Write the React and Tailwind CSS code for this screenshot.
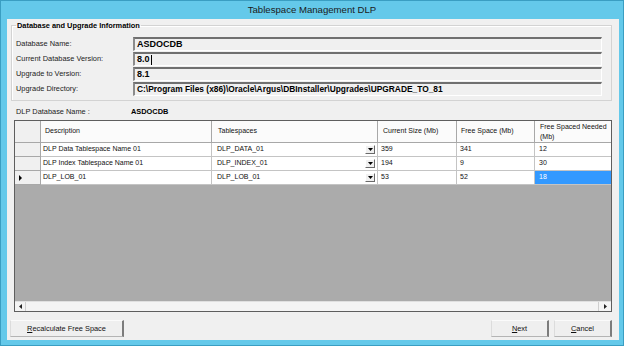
import React from "react";

const fields = [
  { label: "Database Name:", value: "ASDOCDB", size: "text-[9px]" },
  { label: "Current Database Version:", value: "8.0", size: "text-[9px]", caret: true },
  { label: "Upgrade to Version:", value: "8.1", size: "text-[9px]" },
  {
    label: "Upgrade Directory:",
    value: "C:\\Program Files (x86)\\Oracle\\Argus\\DBInstaller\\Upgrades\\UPGRADE_TO_81",
    size: "text-[8.4px]",
  },
];

const rows = [
  { desc: "DLP Data Tablespace Name 01", ts: "DLP_DATA_01", size: "359", free: "341", need: "12" },
  { desc: "DLP Index Tablespace Name 01", ts: "DLP_INDEX_01", size: "194", free: "9", need: "30" },
  { desc: "DLP_LOB_01", ts: "DLP_LOB_01", size: "53", free: "52", need: "18", current: true },
];

const DropButton = () => (
  <div className="w-[10px] h-[9px] mr-[2px] flex items-center justify-center bg-[#f0f0f0] border-t border-l border-t-white border-l-white border-r border-b border-r-[#6a6a6a] border-b-[#6a6a6a]">
    <svg width="5" height="3" viewBox="0 0 5 3">
      <polygon points="0,0 5,0 2.5,3" fill="#000" />
    </svg>
  </div>
);

const WinButton = ({ children, className }) => (
  <button
    className={`h-[17px] flex items-center justify-center bg-[#efefef] text-[7.4px] text-[#111] border-t border-l border-t-[#fbfbfb] border-l-[#dcdcdc] border-r-2 border-b border-r-[#7c7c7c] border-b-[#b4b4b4] ${className}`}
  >
    {children}
  </button>
);

export default function App() {
  return (
    <div className="w-[624px] h-[346px] bg-[#64c9ea] border border-[#3a9ec2] flex flex-col font-['Liberation_Sans',Arial,sans-serif] text-black">
      {/* Title bar */}
      <div className="h-[18px] flex items-center justify-center text-[9.6px] text-[#1b1b1b]">
        Tablespace Management DLP
      </div>

      {/* Client area */}
      <div className="ml-[6px] mr-[4px] mb-[5px] flex-1 bg-[#f0f0f0] flex flex-col">
        {/* Group box */}
        <fieldset className="mt-[2px] ml-[4px] w-[600px] border border-[#d3d3d3] shadow-[inset_1px_1px_0_#ffffff] pl-[4px] pr-[9px] pb-[4px]">
          <legend className="text-[7.4px] leading-[9px] font-bold px-[1px]">
            Database and Upgrade Information
          </legend>
          <div className="mt-[7px] grid grid-cols-[117px_469px] gap-y-[1px]">
            {fields.map((f) => (
              <React.Fragment key={f.label}>
                <div className="h-[14px] flex items-center text-[7.4px] text-[#222]">{f.label}</div>
                <div className="h-[14px] flex items-center pl-[2px] border-t-2 border-l-2 border-t-[#707070] border-l-[#8c8c8c] border-b border-r border-b-white border-r-white">
                  <span className={`${f.size} font-bold leading-none`}>{f.value}</span>
                  {f.caret && <span className="ml-[1px] w-px h-[10px] bg-black" />}
                </div>
              </React.Fragment>
            ))}
          </div>
        </fieldset>

        {/* DLP Database Name */}
        <div className="mt-[5px] h-[12px] flex items-center pl-[9px] text-[7.4px]">
          <span className="w-[115px] text-[#222]">DLP Database Name :</span>
          <span className="font-bold">ASDOCDB</span>
        </div>

        {/* Grid */}
        <div className="mt-[2px] ml-[7px] w-[598px] h-[192px] border border-[#5e5e5e] flex flex-col text-[7px] text-[#111]">
          <div className="grid grid-cols-[26px_171px_166px_79px_78px_76px]">
            {/* header */}
            <div className="h-[22px] bg-[#f0f0f0] border-r border-b border-[#a8a8a8]" />
            <div className="h-[22px] bg-[#fbfbfb] border-r border-b border-[#a8a8a8] flex items-center pl-[4px]">Description</div>
            <div className="h-[22px] bg-[#fbfbfb] border-r border-b border-[#a8a8a8] flex items-center pl-[6px]">Tablespaces</div>
            <div className="h-[22px] bg-[#fbfbfb] border-r border-b border-[#a8a8a8] flex items-center pl-[5px]">Current Size (Mb)</div>
            <div className="h-[22px] bg-[#fbfbfb] border-r border-b border-[#a8a8a8] flex items-center pl-[4px]">Free Space (Mb)</div>
            <div className="h-[22px] bg-[#fbfbfb] border-b border-[#a8a8a8] flex items-center pl-[5px] leading-[10px]">
              Free Spaced Needed
              <br />
              (Mb)
            </div>

            {rows.map((r) => (
              <React.Fragment key={r.desc}>
                <div className="h-[14px] bg-[#f0f0f0] border-r border-b border-[#a8a8a8] flex items-center pl-[4px]">
                  {r.current && (
                    <svg width="3" height="6" viewBox="0 0 3 6">
                      <polygon points="0,0 3,3 0,6" fill="#000" />
                    </svg>
                  )}
                </div>
                <div className="h-[14px] bg-white border-r border-b border-[#c4c4c4] flex items-center pl-[2px]">{r.desc}</div>
                <div className="h-[14px] bg-white border-r border-b border-[#c4c4c4] flex items-center justify-between pl-[5px]">
                  <span>{r.ts}</span>
                  <DropButton />
                </div>
                <div className="h-[14px] bg-white border-r border-b border-[#c4c4c4] flex items-center pl-[3px]">{r.size}</div>
                <div className="h-[14px] bg-white border-r border-b border-[#c4c4c4] flex items-center pl-[3px]">{r.free}</div>
                <div
                  className={`h-[14px] border-b border-[#c4c4c4] flex items-center pl-[4px] ${
                    r.current ? "bg-[#3399ff] text-white" : "bg-white"
                  }`}
                >
                  {r.need}
                </div>
              </React.Fragment>
            ))}
          </div>

          <div className="flex-1 bg-[#ababab]" />

          {/* horizontal scrollbar */}
          <div className="h-[10px] bg-[#f4f4f4] flex justify-between border-t border-[#e0e0e0]">
            <div className="w-[11px] flex items-center justify-center border-r border-[#cfcfcf]">
              <svg width="3" height="5" viewBox="0 0 3 5">
                <polygon points="3,0 0,2.5 3,5" fill="#222" />
              </svg>
            </div>
            <div className="w-[13px] flex items-center justify-center border-l border-[#cfcfcf]">
              <svg width="3" height="5" viewBox="0 0 3 5">
                <polygon points="0,0 3,2.5 0,5" fill="#222" />
              </svg>
            </div>
          </div>
        </div>

        {/* Buttons */}
        <div className="mt-[8px] flex justify-between pl-[3px] pr-[7px]">
          <WinButton className="w-[114px]">
            <span>
              <span className="underline">R</span>ecalculate Free Space
            </span>
          </WinButton>
          <div className="flex gap-[5px]">
            <WinButton className="w-[58px]">
              <span>
                <span className="underline">N</span>ext
              </span>
            </WinButton>
            <WinButton className="w-[58px]">
              <span>
                <span className="underline">C</span>ancel
              </span>
            </WinButton>
          </div>
        </div>
      </div>
    </div>
  );
}
